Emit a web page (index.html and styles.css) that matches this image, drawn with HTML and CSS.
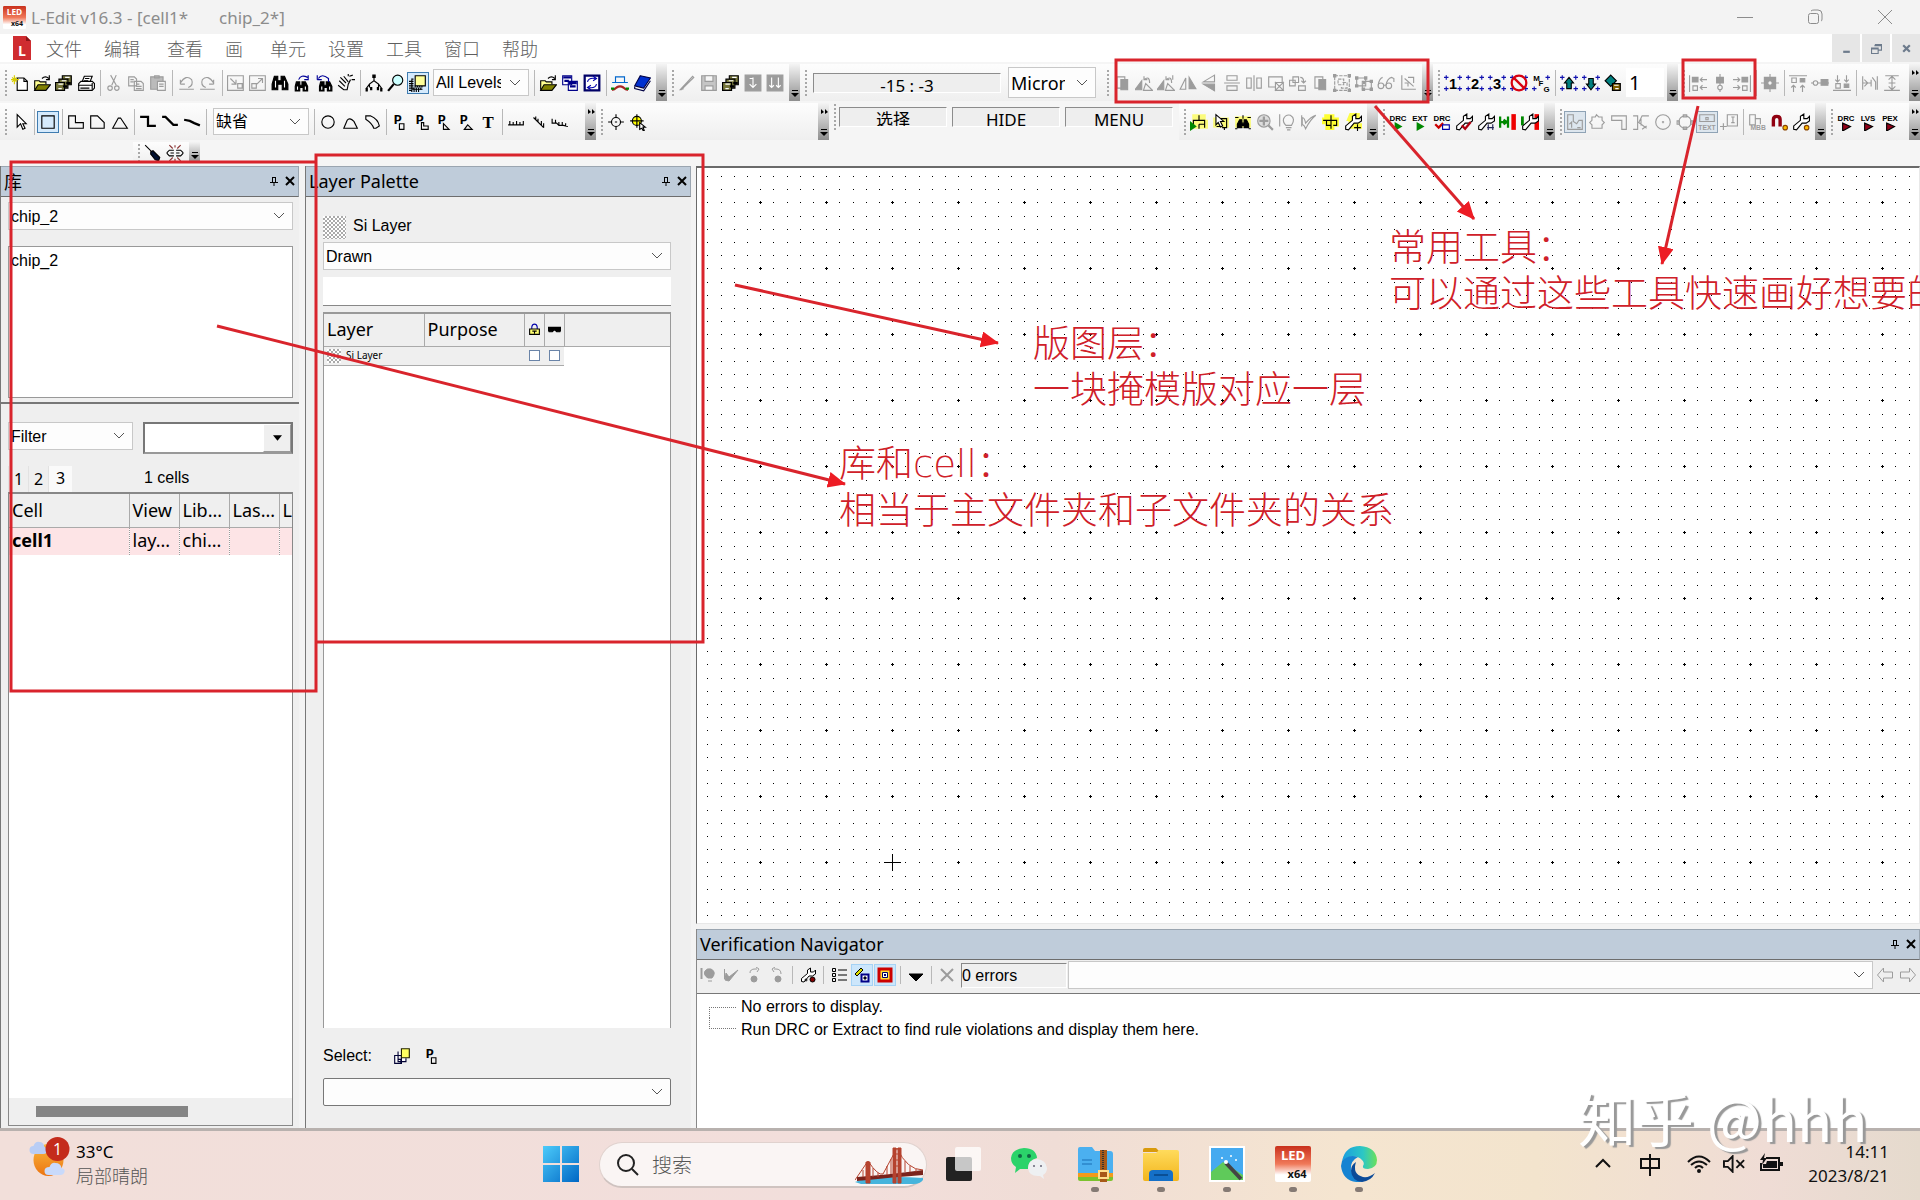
FILE: index.html
```html
<!DOCTYPE html>
<html lang="zh-CN">
<head>
<meta charset="utf-8">
<title>L-Edit v16.3</title>
<link rel="stylesheet" href="styles.css">
</head>
<body>
<svg class="defs" aria-hidden="true">
  <defs>
    <linearGradient id="blueTile" x1="0" y1="0" x2="1" y2="1"><stop offset="0" stop-color="#4ccbfa"/><stop offset="1" stop-color="#0067c5"/></linearGradient>
    <linearGradient id="ledRed" x1="0" y1="0" x2="0" y2="1"><stop offset="0" stop-color="#c9301c"/><stop offset=".5" stop-color="#f0795a"/><stop offset=".8" stop-color="#fff"/></linearGradient>
    <linearGradient id="sun" x1="0" y1="0" x2="0" y2="1"><stop offset="0" stop-color="#f9b83c"/><stop offset="1" stop-color="#ec7412"/></linearGradient>
    <linearGradient id="edgeA" x1="0" y1="0" x2="1" y2="0"><stop offset="0" stop-color="#1a9de0"/><stop offset=".6" stop-color="#2cc7c4"/><stop offset="1" stop-color="#6be05a"/></linearGradient>
    <linearGradient id="folderY" x1="0" y1="0" x2="0" y2="1"><stop offset="0" stop-color="#ffdb5c"/><stop offset="1" stop-color="#f2b51d"/></linearGradient>
  </defs>
  <symbol id="new" viewBox="0 0 16 16"><path d="M5.500 3.500h6l3 3v8h-9z" fill="#fff"/><path d="M11.500 3.500v3h3"/><path d="M3 1v8M0 5h7M1 3l4 4M5 3l-4 4" stroke="#d8cc00"/></symbol>
  <symbol id="open" viewBox="0 0 16 16"><path d="M1.500 14v-8h4l1 1h5v2" fill="#ffff90"/><path d="M1.500 14.500l3-5h11l-4 5z" fill="#808000"/><path d="M8 4q3-3 6 0M14.500 1v4h-3"/></symbol>
  <symbol id="saveall" viewBox="0 0 16 16"><g fill="#78783c"><path d="M6.500 1.500h8v8h-8z"/><path d="M3.500 4.500h8v8h-8z"/><path d="M.5 7.500h8v7h-8z"/></g><path d="M9 3h4M6 6h4M3 9h4M3 13h3" stroke="#fff"/><path d="M10 8h4M7 11h4" stroke="#000" stroke-width="2"/></symbol>
  <symbol id="print" viewBox="0 0 16 16"><path d="M4.500 7l2-5h7l-2 5M1.500 8.500l2-2h10l2 2v4l-2 2h-12z" fill="#fff"/><path d="M1 10h13M7 4h4M6 6h4M3 12.500h8M13.500 8v6"/></symbol>
  <symbol id="cut" viewBox="0 0 16 16"><path d="M5 1l5 9M10 1L6 10"/><circle cx="4.500" cy="12.500" r="2"/><circle cx="10.500" cy="12.500" r="2"/></symbol>
  <symbol id="copy" viewBox="0 0 16 16"><path d="M1.500 2.500h5l2 2v6h-7zM6.500 6.500h6l2 2v6h-8z" fill="#f4f4f4"/><path d="M3 5h3M3 7h3M8 9h3M8 11h5M8 13h5"/></symbol>
  <symbol id="paste" viewBox="0 0 16 16"><path d="M1.500 2.500h11v11h-11z" fill="#bbb"/><path d="M7.500 6.500h7v8h-7z" fill="#f4f4f4"/><path d="M5 1.500h4v2h-4zM9 9h4M9 11h4"/></symbol>
  <symbol id="undo" viewBox="0 0 16 16"><path d="M3 9V5M3 9h4M3 8q5-8 10-3 2 5-3 7M2 13.500h13"/></symbol>
  <symbol id="redo" viewBox="0 0 16 16"><path d="M13 9V5M13 9H9M13 8Q8 0 3 5q-2 5 3 7M1 13.500h13"/></symbol>
  <symbol id="zin" viewBox="0 0 16 16"><path d="M.5 1.500h14v13H.500zM3 4l5 5M8 5v4H4M9.500 8.500h4v4h-4z"/></symbol>
  <symbol id="zout" viewBox="0 0 16 16"><path d="M.5 1.500h14v13H.500zM7 9l5-5M8 4h4v4M2.500 8.500h4v4h-4z"/></symbol>
  <symbol id="bino" viewBox="0 0 16 16"><path d="M3 2h3v4h3V2h3l3 7v5h-5V9H6v5H1V9z" fill="currentColor"/><path d="M4 6v6M12 6v6" stroke="#fff"/></symbol>
  <symbol id="binor" viewBox="0 0 16 16"><path d="M3 7h3v3h2V7h3l2 4v4H9v-3H6v3H2v-4z" fill="currentColor"/><path d="M4 11v3M11 11v3" stroke="#fff"/><path d="M5 5q2-5 8-2M13.500 1v4H10" stroke="#009"/></symbol>
  <symbol id="binol" viewBox="0 0 16 16"><path d="M5 7h3v3h2V7h3l2 4v4h-4v-3H8v3H4v-4z" fill="currentColor"/><path d="M6 11v3M13 11v3" stroke="#fff"/><path d="M2 5V1M2 5h4M3 4q3-5 9 0v3" stroke="#009"/></symbol>
  <symbol id="hand" viewBox="0 0 16 16"><path d="M2 6l5 5M3 3l5 5M6 2l4 5M12 5l-2 4-1 5H6l-5-4M11 2l3-1M13 5h3M10 0v2"/></symbol>
  <symbol id="tree" viewBox="0 0 16 16"><path d="M8 3v3L4 9v3M8 6l4 3v3M4 9l-3 4M12 9l3 4"/><path d="M7 1h2v2H7zM1 13h1v2H1zM5 12h1v2H5zM11 12h1v2h-1zM14 13h1v2h-1z" fill="currentColor"/></symbol>
  <symbol id="mag" viewBox="0 0 16 16"><circle cx="9.500" cy="5.500" r="4.500" fill="#cff"/><path d="M6 9l-5 6" stroke-width="2"/></symbol>
  <symbol id="layers" viewBox="0 0 16 16"><path d="M3 4v9h9M1 6v9h9M5 11h7" stroke-width="2" stroke-dasharray="1 1"/><path d="M5.500 1.500h9v9h-9z" fill="#ff9"/><path d="M2.500 5v8.500H12"/></symbol>
  <symbol id="wins" viewBox="0 0 16 16"><path d="M1.500 1.500h8v8h-8zM6.500 6.500h8v8h-8z" fill="#fff" stroke="#008"/><path d="M2 3h7M3 6h4M7 8h7M8 11h5" stroke="#008" stroke-width="2"/></symbol>
  <symbol id="cycle" viewBox="0 0 16 16"><path d="M1.500 1.500h13v13h-13z" fill="#fff" stroke="#006" stroke-width="2"/><path d="M4 7q1-4 7-3M12 9q-1 4-7 3M9 2l3 2-3 2M7 10l-3 2 3 2" stroke="#00a"/></symbol>
  <symbol id="xsec" viewBox="0 0 16 16"><path d="M4 2.500h8v5H4zM1 7.500h14" stroke="#06c"/><path d="M1 14q2 0 4-2 3-2 6 0 2 2 4 2" stroke="#a22" stroke-width="2"/><path d="M0 13h3M13 13h3" stroke="#080" stroke-width="2"/></symbol>
  <symbol id="book" viewBox="0 0 16 16"><path d="M6.500 1.500l9 2-6 9-8-2z" fill="#0030d0" stroke="#004"/><path d="M1.500 11v2l8 2 6-9" stroke="#004"/></symbol>
  <symbol id="pen" viewBox="0 0 16 16"><path d="M2 14l11-12 1 1L3 14zM2 14l3-1"/></symbol>
  <symbol id="disk" viewBox="0 0 16 16"><path d="M1.500 1.500h13v13h-13z" fill="#c5c5c5"/><path d="M4.500 1.500h7v5h-7zM4.500 10.500h7v4h-7z" fill="#f6f6f6"/></symbol>
  <symbol id="down1" viewBox="0 0 16 16"><path d="M1 1h14v14H1z" fill="currentColor"/><path d="M8 3v9M5 9l3 3 3-3M5 4h3" stroke="#fff"/></symbol>
  <symbol id="down2" viewBox="0 0 16 16"><path d="M1 1h14v14H1z" fill="currentColor"/><path d="M5 3v9M11 3v9M3 10l2 2 2-2M9 10l2 2 2-2" stroke="#fff"/></symbol>
  <symbol id="dup" viewBox="0 0 16 16"><path d="M3.500 2.500h7v10h-7z"/><path d="M7 5h6v9H7z" fill="currentColor"/></symbol>
  <symbol id="rot" viewBox="0 0 16 16"><path d="M0 14l6-8v8z" fill="currentColor"/><path d="M7.500 14.500h8l-6-6zM8 5q5-4 5 3M8 2v3h3"/></symbol>
  <symbol id="rota" viewBox="0 0 16 16"><path d="M0 14l6-8v8z" fill="currentColor"/><path d="M7.500 14.500h8l-6-6zM8 5q5-4 5 3M8 2v3h3M14 1v4"/></symbol>
  <symbol id="fliph" viewBox="0 0 16 16"><path d="M1 13.500l5-10v10z"/><path d="M9 13V3l6 10z" fill="currentColor"/></symbol>
  <symbol id="flipv" viewBox="0 0 16 16"><path d="M2 7l10-6v6z"/><path d="M2 9h10v6z" fill="currentColor"/></symbol>
  <symbol id="slh" viewBox="0 0 16 16"><path d="M3.500 1.500h9v4h-9zM3.500 10.500h9v4h-9zM1 8h14"/></symbol>
  <symbol id="slv" viewBox="0 0 16 16"><path d="M1.500 3.500h4v9h-4zM10.500 3.500h4v9h-4zM8 1v14"/></symbol>
  <symbol id="nib" viewBox="0 0 16 16"><path d="M7 11.500H1.500v-9h12V7M7.500 7.500h7v7h-7zM7 7l8 8M15 7l-8 8"/></symbol>
  <symbol id="merge" viewBox="0 0 16 16"><path d="M.5 5.500h5v5h-5zM3.500 2.500h5v5h-5zM8.500 10.500h6v4h-6zM10 3q3 0 3 4M11 6l2 2 2-2"/></symbol>
  <symbol id="group" viewBox="0 0 16 16"><path d="M4.500 4.500h5v5h-5zM8.500 7.500h4v5h-5v-2M1.500 1.500h13v13h-13z" stroke-dasharray="3 1"/><path d="M0 0h3v3H0zM13 0h3v3h-3zM0 13h3v3H0zM13 13h3v3h-3z" stroke="none" fill="currentColor"/></symbol>
  <symbol id="ungroup" viewBox="0 0 16 16"><path d="M1.500 3.500h8v7h-8zM6.500 6.500h8v7h-8z"/><path d="M0 2h3v3H0zM8 2h3v3H8zM0 9h3v3H0zM13 5h3v3h-3zM13 12h3v3h-3zM6 12h3v3H6zM7 7h2v2H7z" stroke="none" fill="currentColor"/></symbol>
  <symbol id="glass" viewBox="0 0 16 16"><circle cx="3.500" cy="10.500" r="2.500"/><circle cx="10.500" cy="10.500" r="2.500"/><path d="M1 10q1-6 4-7M8 10q1-6 5-7l2 1v3M6 10h2"/></symbol>
  <symbol id="xy" viewBox="0 0 16 16"><path d="M2.500 1v12.500H15M5 4l8 7M8 3h5v5M5 8h3v3"/></symbol>
  <symbol id="plus4" viewBox="0 0 16 16"><path d="M0 3h4M2 1v4M12 3h4M14 1v4M0 13h4M2 11v4M12 13h4M14 11v4" stroke="#1111b0"/></symbol>
  <symbol id="plus2" viewBox="0 0 16 16"><path d="M12 3h4M14 1v4M0 13h4M2 11v4" stroke="#1111b0"/></symbol>
  <symbol id="no" viewBox="0 0 16 16"><use href="#plus4"/><circle cx="8" cy="8" r="6.500" stroke="#d80010" stroke-width="2"/><path d="M3 3l10 10" stroke="#d80010" stroke-width="2"/></symbol>
  <symbol id="gup" viewBox="0 0 16 16"><use href="#plus4"/><path d="M8 3l4 5h-2v5H6V8H4z" fill="#008080"/></symbol>
  <symbol id="gdn" viewBox="0 0 16 16"><use href="#plus4"/><path d="M8 14l4-5h-2V4H6v5H4z" fill="#008080"/></symbol>
  <symbol id="gsave" viewBox="0 0 16 16"><path d="M6 1l5 5-5 5-5-5z" fill="#008080"/><path d="M7.500 8.500h7v6h-7z" fill="#806000"/><path d="M9 10h4M10 13h3" stroke="#fff"/></symbol>
  <symbol id="al" viewBox="0 0 16 16"><path d="M.5 1v15M3 3h5v4H3z" fill="currentColor"/><path d="M3.500 10.500h4v4h-4zM10 5h6M12 3l-2 2 2 2M10 12h6M12 10l-2 2 2 2"/></symbol>
  <symbol id="ac" viewBox="0 0 16 16"><path d="M5 3h6v5H5z" fill="currentColor"/><path d="M8 0v16"/><circle cx="8" cy="12" r="2" fill="#f4f4f4"/></symbol>
  <symbol id="ar" viewBox="0 0 16 16"><path d="M15.500 1v15M8 3h5v4H8z" fill="currentColor"/><path d="M8.500 10.500h4v4h-4zM0 5h6M4 3l2 2-2 2M0 12h6M4 10l2 2-2 2"/></symbol>
  <symbol id="cen" viewBox="0 0 16 16"><path d="M3 3h10v10H3zM8 0v16M0 8h16" fill="currentColor"/><circle cx="8" cy="8" r="2" fill="#f4f4f4"/></symbol>
  <symbol id="at" viewBox="0 0 16 16"><path d="M0 1.500h16M10 4h4v3h-4z" fill="currentColor"/><path d="M2.500 3.500h4v4h-4zM4 16v-6M2 12l2-2 2 2M12 16v-6M10 12l2-2 2 2"/></symbol>
  <symbol id="am" viewBox="0 0 16 16"><path d="M0 8h16M9 5h6v5H9z" fill="currentColor"/><circle cx="4" cy="8" r="2" fill="#f4f4f4"/></symbol>
  <symbol id="ab" viewBox="0 0 16 16"><path d="M0 14.500h16M10 9h4v3h-4z" fill="currentColor"/><path d="M2.500 8.500h4v4h-4zM4 1v6M2 5l2 2 2-2M12 1v6M10 5l2 2 2-2"/></symbol>
  <symbol id="dh" viewBox="0 0 16 16"><path d="M1.500 2v12M14.500 2v12M1 8h8M3 5l3 3-3 3M9 5v6M10 3l3 4v7"/></symbol>
  <symbol id="dv" viewBox="0 0 16 16"><path d="M2 1.500h12M1 14.500h14M8 2v12M5 5l3-3 3 3M5 11l3 3 3-3M5 8h6"/></symbol>
  <symbol id="arrow" viewBox="0 0 16 16"><path d="M5.500 1.500v11l3-3 2 5 2-1-2-4h3z" fill="#fff"/></symbol>
  <symbol id="rect" viewBox="0 0 16 16"><path d="M2.500 2.500h11v11h-11z"/></symbol>
  <symbol id="poly" viewBox="0 0 16 16"><path d="M1.500 2.500h6v6h7v5h-13z"/></symbol>
  <symbol id="poly45" viewBox="0 0 16 16"><path d="M1.500 2.500h6l6 6v5h-12z"/></symbol>
  <symbol id="polya" viewBox="0 0 16 16"><path d="M1.500 13.500l5-9h2l6 9z"/></symbol>
  <symbol id="wire" viewBox="0 0 16 16"><path d="M1 3.500h7v8h7" stroke-width="2"/></symbol>
  <symbol id="wire45" viewBox="0 0 16 16"><path d="M1 3.500h3l7 7h4" stroke-width="2"/></symbol>
  <symbol id="wirea" viewBox="0 0 16 16"><path d="M1 6l5 1 4 2 5 2" stroke-width="2"/></symbol>
  <symbol id="circ" viewBox="0 0 16 16"><circle cx="8" cy="8" r="5.500"/></symbol>
  <symbol id="pie" viewBox="0 0 16 16"><path d="M2.500 13.500l3-7q2-3 6 1l3 6z"/></symbol>
  <symbol id="torus" viewBox="0 0 16 16"><path d="M2.500 2.500h4q7 3 8 9l-3 2h-2q-1-4-7-8z"/></symbol>
  <symbol id="r1" viewBox="0 0 16 16"><path d="M1 10.500h14M2.500 7v3M5.500 8v2M8.500 7v3M11.500 8v2M14.500 7v3"/></symbol>
  <symbol id="r2" viewBox="0 0 16 16"><path d="M4 4l9 9M6 3v3M8 5v3M11 7v4M13 9v4"/></symbol>
  <symbol id="r3" viewBox="0 0 16 16"><path d="M1 5v4h4l2 2h4l4 1M4 6v3M7 8v3M10 8v3M13 9v3"/></symbol>
  <symbol id="tgt" viewBox="0 0 16 16"><circle cx="8" cy="8" r="4"/><path d="M8 1v3M8 12v3M1 8h3M12 8h3M7 8h2"/></symbol>
  <symbol id="tgty" viewBox="0 0 16 16"><circle cx="7" cy="7" r="4" fill="#ff0"/><path d="M7 1v12M1 7h12"/><path d="M9.500 8.500v6l2-1 1 2h1l-1-3h2z" fill="#fff"/></symbol>
  <symbol id="brush" viewBox="0 0 16 16"><path d="M1 1l6 6"/><path d="M6 7l2-1 6 6-1 3-3-1-4-5z" fill="#001030"/></symbol>
  <symbol id="unlink" viewBox="0 0 16 16"><path d="M7 5.500H3l-2 2v1l2 2h4M9 5.500h4l2 2v1l-2 2H9M4 8h3M9 8h3"/><path d="M3 1l3 3M8 1v2M13 1l-3 3M3 15l3-3M8 13v2M13 15l-3-3" stroke="#833"/></symbol>
  <symbol id="net" viewBox="0 0 16 16"><path d="M2 1h12v5h2v8H2z" fill="#ff0" stroke="none" opacity=".5"/><path d="M8 2v4M3 6.500h10M3 6v4M13 6v7M8 10h5M8 10v4"/><path d="M0 7l6 5-6 4z" fill="#080" stroke="none"/></symbol>
  <symbol id="netc" viewBox="0 0 16 16"><path d="M1 4h14v9H1z" fill="#ff0" stroke="none" opacity=".5"/><path d="M8 5h5v8H9M4 12h4M11 13v2"/><path d="M3.500 1.500v9l2-2 2 4 2-1-2-4h3z" fill="#fff"/></symbol>
  <symbol id="netb" viewBox="0 0 16 16"><path d="M1 3h14v10H1z" fill="#ff0" stroke="none" opacity=".5"/><path d="M5 6h2v3h2V6h2l2 4v3H9v-2H7v2H3v-3z" fill="currentColor"/><path d="M1 4h3M12 4h3M8 2v3M1 14h2M13 14h2"/></symbol>
  <symbol id="netz" viewBox="0 0 16 16"><circle cx="7" cy="7" r="5.500" fill="#ddd"/><path d="M7 3v8M3 7h8M11 11l4 4" stroke-width="2"/></symbol>
  <symbol id="bulb" viewBox="0 0 16 16"><path d="M1.500 1v11M7 11q-3-3-2-6 2-4 6-3 5 3 1 9zM7 13h5M8 15h3"/></symbol>
  <symbol id="check" viewBox="0 0 16 16"><path d="M1.500 2v10M2 10q2 1 3 4 4-8 9-12-4 1-9 7Q4 4 2 4z"/></symbol>
  <symbol id="nety" viewBox="0 0 16 16"><path d="M2 1h9v3h4v8h-4v3H3v-5H0V4h2z" fill="#ff0" stroke="none" opacity=".8"/><path d="M1 6.500h12M8 2v5M8 7v7M4 7v4h4M13 6v5h-3"/></symbol>
  <symbol id="wrench" viewBox="0 0 16 16"><path d="M1.500 14.500v-3l6-5V3l3-2v4h3l2-2v4l-3 2H9l-5 6z" fill="#fff"/></symbol>
  <symbol id="wry" viewBox="0 0 16 16"><path d="M5 0h9v9h2v5H4V7H2z" fill="#ff0" stroke="none" opacity=".7"/><use href="#wrench"/><path d="M9 13h6M12 10v6"/></symbol>
  <symbol id="wrr" viewBox="0 0 16 16"><use href="#wrench"/><path d="M6 11l3 3 5-6" stroke="#b00010" stroke-width="2"/></symbol>
  <symbol id="wrg" viewBox="0 0 16 16"><use href="#wrench"/><path d="M9 13h6M10 10v5M14 10v5" stroke="#225"/></symbol>
  <symbol id="wro" viewBox="0 0 16 16"><use href="#wrench"/><circle cx="13" cy="13" r="2" fill="#fb0" stroke="#840"/></symbol>
  <symbol id="wrb" viewBox="0 0 16 16"><use href="#wrench"/><circle cx="12.500" cy="12.500" r="2.500" fill="#800000"/><circle cx="6" cy="13" r="1"/></symbol>
  <symbol id="play" viewBox="0 0 16 16"><path d="M5 8l7 4-7 4z" fill="#080" stroke="none"/></symbol>
  <symbol id="tick" viewBox="0 0 16 16"><path d="M2 10l3 3 4-4" stroke="#c00" stroke-width="2"/><path d="M8.500 10.500h6v4h-6z" fill="#fff" stroke="#00a"/></symbol>
  <symbol id="playr" viewBox="0 0 16 16"><path d="M5 9l7 3-7 4z" fill="#900018"/></symbol>
  <symbol id="stop" viewBox="0 0 16 16"><path d="M1 3v10M1 8h5M4 6l3 2-3 2M8 3v10" stroke="#080" stroke-width="2"/><path d="M11 1h4v14h-4z" fill="#e00" stroke="none"/></symbol>
  <symbol id="wrs" viewBox="0 0 16 16"><path d="M1 3v8" stroke="#080" stroke-width="3"/><path d="M12 1h4v14h-4z" fill="#e00" stroke="none"/><use href="#wrench"/></symbol>
  <symbol id="s1" viewBox="0 0 16 16"><path d="M1.500 1.500h5v6l3 2 2-3h3v8h-13zM3 10l2-2v5M10 13h3"/></symbol>
  <symbol id="s2" viewBox="0 0 16 16"><path d="M3.500 3.500h3l1-2 2 2h3v3l2 2-2 2v3h-9v-3l-2-2 2-2z"/></symbol>
  <symbol id="s3" viewBox="0 0 16 16"><path d="M1.500 2.500h13v12h-4v-8h-9z"/></symbol>
  <symbol id="s4" viewBox="0 0 16 16"><path d="M1 2.500h4v12H1M9 14.500l4-3M15 2.500H9l-3 6 7 5M8 5v6"/></symbol>
  <symbol id="s5" viewBox="0 0 16 16"><circle cx="8" cy="8" r="6.500"/><path d="M7 8h2M8 7v2"/></symbol>
  <symbol id="s6" viewBox="0 0 16 16"><circle cx="8" cy="8" r="5.500"/><path d="M6.500 1.500h3v2h-3zM6.500 12.500h3v2h-3zM1 7h2v3H1zM13 7h2v3h-2z"/></symbol>
  <symbol id="s8" viewBox="0 0 16 16"><path d="M6.500 1.500h9v10h-9zM0 12h6M3 9v6M10 3.500h3M10 8.500h3M11.500 4v4"/></symbol>
  <symbol id="magnet" viewBox="0 0 16 16"><path d="M3 12V6q0-3 3-3t3 3v6" stroke="#900010" stroke-width="3"/><circle cx="13.500" cy="13" r="2" fill="#fb0" stroke="#840"/></symbol>
  <symbol id="list" viewBox="0 0 16 16"><path d="M1.500 1.500h3v3h-3zM1.500 6.500h3v3h-3zM1.500 11.500h3v3h-3zM7 3h9M7 8h9M7 13h9"/></symbol>
  <symbol id="ruler" viewBox="0 0 16 16"><path d="M1 7l6-6 2 2-6 6z" fill="#dd0"/><path d="M7.500 7.500h7v7h-7z" fill="#fff" stroke="#008" stroke-width="2"/><path d="M10 10h2v2h-2z" fill="#008"/></symbol>
  <symbol id="box" viewBox="0 0 16 16"><path d="M2 2h12v12H2z" fill="#fd3" stroke="#c00" stroke-width="3"/><path d="M5.500 5.500h5v5h-5z" fill="#fff" stroke="#006"/><path d="M7 7l2 2M9 7l-2 2" stroke="#006"/></symbol>
  <symbol id="redoc" viewBox="0 0 16 16"><path d="M4 6q0-4 5-4h2M10 0l3 2-2 3"/><circle cx="8" cy="12" r="3" fill="currentColor"/></symbol>
  <symbol id="undoc" viewBox="0 0 16 16"><path d="M12 7q0-5-5-5H5M6 0L3 2l2 3"/><circle cx="9" cy="12" r="3" fill="currentColor"/></symbol>
  <symbol id="bulbf" viewBox="0 0 16 16"><path d="M1.500 1v11" stroke-width="2"/><path d="M8 11q-5-3-3-7 2-3 6-2 6 3 1 9zM8 14h4" fill="currentColor"/></symbol>
  <symbol id="checkf" viewBox="0 0 16 16"><path d="M1.500 2v10M3 6l3 4 9-7-9 11-4-1z" fill="currentColor"/></symbol>
  <symbol id="tri" viewBox="0 0 16 16"><path d="M1 7h14l-7 7z" fill="currentColor"/></symbol>
  <symbol id="x" viewBox="0 0 16 16"><path d="M2 2l12 12M14 2L2 14" stroke-width="2"/></symbol>
  <symbol id="back" viewBox="0 0 16 16"><path d="M.5 8l6-7v4h9v6h-9v4z"/></symbol>
  <symbol id="fwd" viewBox="0 0 16 16"><path d="M15.500 8l-6-7v4h-9v6h9v4z"/></symbol>
  <symbol id="pin" viewBox="0 0 10 10"><path d="M3 1.500h4M3.500 1v5M6.500 1v5M1 6.500h8M5 7v3"/></symbol>
  <symbol id="close" viewBox="0 0 10 10"><path d="M1 1l8 8M9 1L1 9" stroke-width="2"/></symbol>
  <symbol id="sel" viewBox="0 0 16 16"><path d="M4.500 4v9h7v-3M1.500 7.500h6v7h-6zM4 11h3v3" fill="#fff" stroke="#003"/><path d="M7.500 1.500h7v8h-7z" fill="#ffff60" stroke="#220"/></symbol>
</svg>

<div class="app">
  <header class="titlebar">
    <svg class="applogo" viewBox="0 0 36 36"><rect width="36" height="36" rx="2" fill="url(#ledRed)" stroke="none"/><text x="18" y="14" class="led">LED</text><text x="22" y="32" class="x64">x64</text></svg>
    <h1>L-Edit v16.3 - [cell1*</h1><span class="doc">chip_2*]</span>
    <div class="winctl">
      <button aria-label="最小化"><svg viewBox="0 0 16 16"><path d="M0 8.500h16"/></svg></button>
      <button aria-label="还原"><svg viewBox="0 0 16 16"><rect x="1.500" y="4.500" width="10" height="10" rx="2"/><path d="M4 2q1-1 3-1h4q4 0 4 4v5q0 2-1 2"/></svg></button>
      <button aria-label="关闭"><svg viewBox="0 0 16 16"><path d="M1 1l14 14M15 1L1 15"/></svg></button>
    </div>
  </header>
  <nav class="menubar">
    <svg class="doclogo" viewBox="0 0 18 24"><path d="M0 0h13l5 5v19H0z" fill="#cf2c30"/><path d="M13 0l5 5h-5z" fill="#8c1518"/><text x="9" y="20" class="docl">L</text></svg>
    <button>文件</button><button>编辑</button><button class="wide">查看</button><button>画</button><button class="wide">单元</button><button>设置</button><button>工具</button><button>窗口</button><button>帮助</button>
    <div class="mdictl">
      <button aria-label="最小化"><svg viewBox="0 0 10 10"><path d="M2 8h6" stroke-width="2"/></svg></button>
      <button aria-label="还原"><svg viewBox="0 0 10 10"><path d="M3.500 1.500h6v5h-3M.5 4.500h6v5h-6zM3 2.500h6M1 5.500h5"/></svg></button>
      <button aria-label="关闭"><svg viewBox="0 0 10 10"><path d="M2 2l6 6M8 2L2 8" stroke-width="2"/></svg></button>
    </div>
  </nav>

  <section class="toolbars">
    <div class="row">
      <div class="bar"><i class="grip"></i>
        <button class="b"><svg><use href="#new"/></svg></button><button class="b"><svg><use href="#open"/></svg></button><button class="b"><svg><use href="#saveall"/></svg></button><button class="b"><svg><use href="#print"/></svg></button><i class="sep"></i>
        <button class="b" disabled><svg><use href="#cut"/></svg></button><button class="b" disabled><svg><use href="#copy"/></svg></button><button class="b" disabled><svg><use href="#paste"/></svg></button><i class="sep"></i>
        <button class="b" disabled><svg><use href="#undo"/></svg></button><button class="b" disabled><svg><use href="#redo"/></svg></button><i class="sep"></i>
        <button class="b" disabled><svg><use href="#zin"/></svg></button><button class="b" disabled><svg><use href="#zout"/></svg></button><button class="b"><svg><use href="#bino"/></svg></button><button class="b"><svg><use href="#binor"/></svg></button><button class="b"><svg><use href="#binol"/></svg></button><button class="b"><svg><use href="#hand"/></svg></button><i class="sep"></i>
        <button class="b"><svg><use href="#tree"/></svg></button><button class="b"><svg><use href="#mag"/></svg></button><button class="b on"><svg><use href="#layers"/></svg></button>
        <select class="combo tool" aria-label="层级"><option>All Levels</option></select><i class="sep"></i>
        <button class="b"><svg><use href="#open"/></svg></button><button class="b"><svg><use href="#wins"/></svg></button><button class="b"><svg><use href="#cycle"/></svg></button><i class="sep"></i>
        <button class="b"><svg><use href="#xsec"/></svg></button><button class="b"><svg><use href="#book"/></svg></button><button class="more" aria-label="更多"></button>
      </div>
      <div class="bar"><i class="grip"></i>
        <button class="b" disabled><svg><use href="#pen"/></svg></button><button class="b" disabled><svg><use href="#disk"/></svg></button><button class="b"><svg><use href="#saveall"/></svg></button><button class="b" disabled><svg><use href="#down1"/></svg></button><button class="b" disabled><svg><use href="#down2"/></svg></button><button class="more" aria-label="更多"></button>
      </div>
      <div class="bar locator"><i class="grip"></i><output class="field coords">-15 : -3</output><select class="combo units" aria-label="单位"><option>Microns</option></select></div>
      <div class="bar"><i class="grip"></i>
        <button class="b" disabled><svg><use href="#dup"/></svg></button><button class="b" disabled><svg><use href="#rot"/></svg></button><button class="b" disabled><svg><use href="#rota"/></svg></button><button class="b" disabled><svg><use href="#fliph"/></svg></button><button class="b" disabled><svg><use href="#flipv"/></svg></button><button class="b" disabled><svg><use href="#slh"/></svg></button><button class="b" disabled><svg><use href="#slv"/></svg></button><button class="b" disabled><svg><use href="#nib"/></svg></button><button class="b" disabled><svg><use href="#merge"/></svg></button><button class="b" disabled><svg><use href="#dup"/></svg></button><button class="b" disabled><svg><use href="#group"/></svg></button><button class="b" disabled><svg><use href="#ungroup"/></svg></button><button class="b" disabled><svg><use href="#glass"/></svg></button><button class="b" disabled><svg><use href="#xy"/></svg></button><button class="more" aria-label="更多"></button>
      </div>
      <div class="bar"><i class="grip"></i>
        <button class="b"><svg viewBox="0 0 16 16"><use href="#plus4"/><text x="8" y="13" class="num">1</text></svg></button><button class="b"><svg viewBox="0 0 16 16"><use href="#plus4"/><text x="8" y="13" class="num">2</text></svg></button><button class="b"><svg viewBox="0 0 16 16"><use href="#plus4"/><text x="8" y="13" class="num">3</text></svg></button><button class="b"><svg><use href="#no"/></svg></button><button class="b"><svg viewBox="0 0 16 16"><use href="#plus2"/><text x="4" y="6" class="t7">M</text><text x="8" y="11" class="t7">F</text><text x="13" y="16" class="t7">G</text></svg></button><i class="sep"></i>
        <button class="b"><svg><use href="#gup"/></svg></button><button class="b"><svg><use href="#gdn"/></svg></button><button class="b"><svg><use href="#gsave"/></svg></button><input class="gridn" value="1" aria-label="网格"><button class="more" aria-label="更多"></button>
      </div>
      <div class="bar grow"><i class="grip"></i>
        <button class="b" disabled><svg><use href="#al"/></svg></button><button class="b" disabled><svg><use href="#ac"/></svg></button><button class="b" disabled><svg><use href="#ar"/></svg></button><i class="sep"></i><button class="b" disabled><svg><use href="#cen"/></svg></button><i class="sep"></i>
        <button class="b" disabled><svg><use href="#at"/></svg></button><button class="b" disabled><svg><use href="#am"/></svg></button><button class="b" disabled><svg><use href="#ab"/></svg></button><i class="sep"></i>
        <button class="b" disabled><svg><use href="#dh"/></svg></button><button class="b" disabled><svg><use href="#dv"/></svg></button><button class="more" aria-label="更多"><svg class="chev" viewBox="0 0 8 5"><path d="M1 0v5l3-2zM5 0v5l3-2z"/></svg></button>
      </div>
    </div>
    <div class="row">
      <div class="bar"><i class="grip"></i>
        <button class="b"><svg><use href="#arrow"/></svg></button><i class="sep"></i><button class="b on"><svg><use href="#rect"/></svg></button><i class="sep"></i>
        <button class="b"><svg><use href="#poly"/></svg></button><button class="b"><svg><use href="#poly45"/></svg></button><button class="b"><svg><use href="#polya"/></svg></button><i class="sep"></i>
        <button class="b"><svg><use href="#wire"/></svg></button><button class="b"><svg><use href="#wire45"/></svg></button><button class="b"><svg><use href="#wirea"/></svg></button><i class="sep"></i>
        <select class="combo tool" aria-label="线宽"><option>缺省</option></select><i class="sep"></i>
        <button class="b"><svg><use href="#circ"/></svg></button><button class="b"><svg><use href="#pie"/></svg></button><button class="b"><svg><use href="#torus"/></svg></button><i class="sep"></i>
        <button class="b"><svg viewBox="0 0 16 16"><text x="6" y="10" class="pp">P</text><path d="M7.500 9.500h4v5h-4z"/></svg></button><button class="b"><svg viewBox="0 0 16 16"><text x="6" y="10" class="pp">P</text><path d="M7.500 8.500h2v3h4v3h-6z"/></svg></button><button class="b"><svg viewBox="0 0 16 16"><text x="6" y="10" class="pp">P</text><path d="M7.500 14.500v-5l5 5z"/></svg></button><button class="b"><svg viewBox="0 0 16 16"><text x="6" y="10" class="pp">P</text><path d="M6.500 14.500l3-4 4 4z"/></svg></button><button class="b"><svg viewBox="0 0 16 16"><text x="8" y="13" class="tt">T</text></svg></button><i class="sep"></i>
        <button class="b"><svg><use href="#r1"/></svg></button><button class="b"><svg><use href="#r2"/></svg></button><button class="b"><svg><use href="#r3"/></svg></button><button class="more apart" aria-label="更多"><svg class="chev" viewBox="0 0 8 5"><path d="M1 0v5l3-2zM5 0v5l3-2z"/></svg></button>
      </div>
      <div class="bar basepoint"><i class="grip"></i>
        <button class="b"><svg><use href="#tgt"/></svg></button><button class="b"><svg><use href="#tgty"/></svg></button><button class="more" aria-label="更多"><svg class="chev" viewBox="0 0 8 5"><path d="M1 0v5l3-2zM5 0v5l3-2z"/></svg></button>
      </div>
      <div class="bar mouse"><i class="grip"></i><output class="field">选择</output><output class="field">HIDE</output><output class="field">MENU</output></div>
      <div class="bar"><i class="grip"></i>
        <button class="b"><svg><use href="#net"/></svg></button><button class="b"><svg><use href="#netc"/></svg></button><button class="b"><svg><use href="#netb"/></svg></button><button class="b" disabled><svg><use href="#netz"/></svg></button><button class="b" disabled><svg><use href="#bulb"/></svg></button><button class="b" disabled><svg><use href="#check"/></svg></button><button class="b"><svg><use href="#nety"/></svg></button><button class="b"><svg><use href="#wry"/></svg></button><button class="more" aria-label="更多"></button>
      </div>
      <div class="bar"><i class="grip"></i>
        <button class="b"><svg viewBox="0 0 16 16"><use href="#play"/><text x="8" y="7" class="t7">DRC</text></svg></button><button class="b"><svg viewBox="0 0 16 16"><use href="#play"/><text x="8" y="7" class="t7">EXT</text></svg></button><button class="b"><svg viewBox="0 0 16 16"><use href="#tick"/><text x="8" y="7" class="t7">DRC</text></svg></button><button class="b"><svg><use href="#wrr"/></svg></button><button class="b"><svg><use href="#wrg"/></svg></button><button class="b"><svg><use href="#stop"/></svg></button><button class="b"><svg><use href="#wrs"/></svg></button><button class="more" aria-label="更多"></button>
      </div>
      <div class="bar"><i class="grip"></i>
        <button class="b on" disabled><svg><use href="#s1"/></svg></button><button class="b" disabled><svg><use href="#s2"/></svg></button><button class="b" disabled><svg><use href="#s3"/></svg></button><button class="b" disabled><svg><use href="#s4"/></svg></button><button class="b" disabled><svg><use href="#s5"/></svg></button><button class="b" disabled><svg><use href="#s6"/></svg></button><button class="b on" disabled><svg viewBox="0 0 16 16"><path d="M1.500 1.500h13v6h-13zM7 4h2v2H7z"/><text x="8" y="15" class="t6">TEXT</text></svg></button><button class="b" disabled><svg><use href="#s8"/></svg></button><i class="sep"></i>
        <button class="b" disabled><svg viewBox="0 0 16 16"><path d="M1.500 1.500h5v9h-5zM7 5h4v5"/><text x="9" y="15" class="t6">MBB</text></svg></button><button class="b"><svg><use href="#magnet"/></svg></button><button class="b"><svg><use href="#wro"/></svg></button><button class="more" aria-label="更多"></button>
      </div>
      <div class="bar grow"><i class="grip"></i>
        <button class="b"><svg viewBox="0 0 16 16"><use href="#playr"/><text x="8" y="7" class="t7">DRC</text></svg></button><button class="b"><svg viewBox="0 0 16 16"><use href="#playr"/><text x="8" y="7" class="t7">LVS</text></svg></button><button class="b"><svg viewBox="0 0 16 16"><use href="#playr"/><text x="8" y="7" class="t7">PEX</text></svg></button><button class="more" aria-label="更多"><svg class="chev" viewBox="0 0 8 5"><path d="M1 0v5l3-2zM5 0v5l3-2z"/></svg></button>
      </div>
    </div>
    <div class="row third">
      <div class="bar"><i class="grip"></i><button class="b"><svg><use href="#brush"/></svg></button><button class="b"><svg><use href="#unlink"/></svg></button><button class="more" aria-label="更多"></button></div>
    </div>
  </section>

  <main class="work">
    <section class="panel library">
      <h2 class="phead">库<span><svg><use href="#pin"/></svg><svg><use href="#close"/></svg></span></h2>
      <div class="libtop">
        <select class="combo" aria-label="库"><option>chip_2</option></select>
        <div class="liblist">chip_2</div>
      </div>
      <div class="libcells">
        <div class="filters">
          <select class="combo" aria-label="过滤"><option>Filter</option></select>
          <div class="search"><input aria-label="过滤文本"><button aria-label="展开"><svg viewBox="0 0 10 6"><path d="M0 0h10L5 6z"/></svg></button></div>
        </div>
        <div class="tabs"><button>1</button><button>2</button><button class="cur">3</button><span>1 cells</span></div>
        <div class="cellbox">
          <table class="cells">
            <colgroup><col class="c1"><col class="c2"><col class="c2"><col class="c2"><col></colgroup>
            <thead><tr><th>Cell</th><th>View</th><th>Lib...</th><th>Las...</th><th>L</th></tr></thead>
            <tbody><tr><td><b>cell1</b></td><td>lay...</td><td>chi...</td><td></td><td></td></tr></tbody>
          </table>
          <div class="hscroll"><i></i></div>
        </div>
      </div>
    </section>

    <section class="panel palette">
      <h2 class="phead">Layer Palette<span><svg><use href="#pin"/></svg><svg><use href="#close"/></svg></span></h2>
      <div class="palbody">
        <div class="current"><i class="hatch"></i>Si Layer</div>
        <select class="combo" aria-label="用途"><option>Drawn</option></select>
        <input class="palfilter" aria-label="图层过滤">
        <div class="laybox">
          <table class="layers">
            <colgroup><col class="c3"><col class="c3"><col class="c4"><col class="c4"><col></colgroup>
            <thead><tr><th>Layer</th><th>Purpose</th>
              <th class="ic"><svg viewBox="0 0 12 12"><path d="M3.500 6V3.500Q4 1 6 1t2.500 2.500V6" stroke="#00a"/><path d="M1.500 5.500h9v5h-9z" fill="#ffff70"/><path d="M4 7.500h4M6 7v3"/></svg></th>
              <th class="ic"><svg viewBox="0 0 12 12"><path d="M0 4h12v2l-1 2H8L6 6 4 8H1L0 6z" fill="#000"/></svg></th><th></th></tr></thead>
            <tbody><tr><td colspan="2"><i class="hatch small"></i>Si Layer</td><td class="ic"><input type="checkbox" aria-label="锁定"></td><td class="ic"><input type="checkbox" aria-label="隐藏"></td></tr></tbody>
          </table>
        </div>
        <div class="selrow">Select:<svg><use href="#sel"/></svg><svg viewBox="0 0 16 16"><text x="6" y="10" class="pp">P</text><path d="M7.500 9.500h4v5h-4z"/></svg></div>
        <select class="combo dark" aria-label="选择"><option></option></select>
      </div>
    </section>

    <section class="editor">
      <div class="canvas">
        <svg width="100%" height="100%">
          <defs><pattern id="grid" width="66" height="66" patternUnits="userSpaceOnUse" x="62" y="33">
            <path d="M1 1h1v1h-1zM14 1h1v1h-1zM28 1h1v1h-1zM41 1h1v1h-1zM54 1h1v1h-1zM1 15h1v1h-1zM14 15h1v1h-1zM28 15h1v1h-1zM41 15h1v1h-1zM54 15h1v1h-1zM1 28h1v1h-1zM14 28h1v1h-1zM28 28h1v1h-1zM41 28h1v1h-1zM54 28h1v1h-1zM1 41h1v1h-1zM14 41h1v1h-1zM28 41h1v1h-1zM41 41h1v1h-1zM54 41h1v1h-1zM1 54h1v1h-1zM14 54h1v1h-1zM28 54h1v1h-1zM41 54h1v1h-1zM54 54h1v1h-1zM0 1h3v1h-3zM1 0h1v3h-1z"/></pattern></defs>
          <rect width="100%" height="100%" fill="url(#grid)"/>
          <path d="M187 694h17v1h-17zM195 686h1v17h-1z"/>
        </svg>
      </div>
      <section class="verify">
        <h2 class="phead">Verification Navigator<span><svg><use href="#pin"/></svg><svg><use href="#close"/></svg></span></h2>
        <div class="vbar">
          <button class="b" disabled><svg><use href="#bulbf"/></svg></button><button class="b" disabled><svg><use href="#checkf"/></svg></button><button class="b" disabled><svg><use href="#redoc"/></svg></button><button class="b" disabled><svg><use href="#undoc"/></svg></button><i class="sep"></i>
          <button class="b"><svg><use href="#wrb"/></svg></button><i class="sep"></i>
          <button class="b"><svg><use href="#list"/></svg></button><button class="b on"><svg><use href="#ruler"/></svg></button><button class="b on"><svg><use href="#box"/></svg></button><i class="sep"></i>
          <button class="b"><svg><use href="#tri"/></svg></button><i class="sep"></i>
          <button class="b" disabled><svg><use href="#x"/></svg></button>
          <output class="errs">0 errors</output>
          <select class="combo" aria-label="规则"><option></option></select>
          <button class="b" disabled><svg><use href="#back"/></svg></button><button class="b" disabled><svg><use href="#fwd"/></svg></button>
        </div>
        <ul class="tree"><li>No errors to display.</li><li>Run DRC or Extract to find rule violations and display them here.</li></ul>
      </section>
    </section>
  </main>

  <footer class="taskbar">
    <div class="weather">
      <svg viewBox="0 0 40 44"><ellipse cx="19" cy="24" rx="15" ry="16" fill="url(#sun)"/><path d="M4 18q-4 0-4-4t4-4q2-5 6-4 4 0 5 5 4 1 3 4t-4 3z" fill="#b9cdf5"/><path d="M19 39q-4 0-4-4t5-4q2-5 6-4 5 0 6 5 4 1 3 4t-4 3z" fill="#c9dafb"/><ellipse cx="28" cy="13" rx="12" ry="12" fill="#c42b1c"/><text x="28" y="19" class="badge">1</text></svg>
      <p><span>33°C</span><span class="dim">局部晴朗</span></p>
    </div>
    <div class="apps">
      <button class="start" aria-label="开始"><svg viewBox="0 0 36 36"><path d="M0 0h17v17H0zM19 0h17v17H19zM0 19h17v17H0zM19 19h17v17H19z" fill="url(#blueTile)"/></svg></button>
      <label class="find">
        <svg class="lens" viewBox="0 0 24 24"><circle cx="10" cy="10" r="8"/><path d="M16 16l6 6"/></svg>
        <input placeholder="搜索">
        <svg class="bridge" viewBox="0 0 68 38"><path d="M0 36q20-7 68-4v2q-3 4-9 4H6z" fill="#46b4dc"/><path d="M2 31q30-2 66-7v5Q40 31 2 35z" fill="#7a231c"/><path d="M11 16h4v21h-4zM38 2h3v35h-3zM43 2h3v35h-3zM39 8h6M39 14h6M39 20h6" fill="#b5432f" stroke="#b5432f"/><path d="M0 34L13 15q10 15 15 13L42 2q10 22 26 22M8 24v7M18 22v9M23 27v4M32 20v9M36 13v15M50 15v11M55 20v6M61 23v3" fill="none" stroke="#b5432f"/></svg>
      </label>
      <button aria-label="任务视图"><svg viewBox="0 0 36 36"><rect x="1" y="11" width="26" height="24" rx="2" fill="#222"/><rect x="10" y="1" width="26" height="24" rx="2" fill="#fff" opacity=".75"/></svg></button>
      <button aria-label="微信"><svg viewBox="0 0 36 36"><path d="M13 2q12 0 13 10-9 2-9 11H9l-5 4 1-6q-5-3-5-9Q1 3 13 2z" fill="#2bd36a"/><path d="M26 13q9 1 10 9 0 5-4 7l1 4-4-3q-11 1-12-8 0-8 9-9z" fill="#eef0f2"/><g fill="#164"><circle cx="9" cy="10" r="2"/><circle cx="18" cy="10" r="2"/></g><g fill="#667"><circle cx="23" cy="20" r="1"/><circle cx="30" cy="20" r="1"/></g></svg></button>
      <button class="run" aria-label="压缩"><svg viewBox="0 0 36 36"><path d="M1 3q0-2 2-2h12l3 4h15q3 0 3 3v20H1z" fill="#4bb0f0"/><path d="M1 27h35v4H1z" fill="#f29a1c"/><path d="M1 31h35v2q0 2-2 2H3q-2 0-2-2z" fill="#7cc22e"/><path d="M23 4h7v32h-7z" fill="#a85a18"/><path d="M26 4v20" stroke="#333" stroke-width="2" stroke-dasharray="1 1"/><rect x="22" y="25" width="9" height="7" fill="none" stroke="#ffe08a" stroke-width="2"/><path d="M5 14h10M5 18h10" stroke="#1a6fb5"/></svg></button>
      <button class="run" aria-label="资源管理器"><svg viewBox="0 0 36 36"><path d="M0 4q0-2 2-2h11l4 4H0z" fill="#d99a0b"/><path d="M0 7h13l3-3h18q2 0 2 2v27q0 2-2 2H2q-2 0-2-2z" fill="url(#folderY)"/><path d="M6 35v-7q0-4 4-4h16q4 0 4 4v7z" fill="#1570c8"/><path d="M11 29h14" stroke="#0a4f95" stroke-width="2"/></svg></button>
      <button class="run" aria-label="图片"><svg viewBox="0 0 36 36"><path d="M0 0h36v36H0z" fill="#fff"/><path d="M2 2h32v32H2z" fill="#45aaf0"/><path d="M2 26l12-10 20 13v5H2z" fill="#5fca5a"/><path d="M17 17l15 16" stroke="#444" stroke-width="4"/><g fill="#fff"><circle cx="17" cy="16" r="2"/><circle cx="13" cy="12" r="1"/><circle cx="22" cy="10" r="1"/><circle cx="27" cy="14" r="1"/></g></svg></button>
      <button class="run" aria-label="L-Edit"><svg viewBox="0 0 36 36"><rect width="36" height="36" rx="2" fill="url(#ledRed)" stroke="none"/><text x="18" y="14" class="led">LED</text><text x="22" y="32" class="x64">x64</text></svg></button>
      <button class="run" aria-label="Edge"><svg viewBox="0 0 36 36"><path d="M1 15Q4 0 19 0q16 1 17 14 0 8-9 9-6 0-5-3 2-3-1-6-8-8-20 1z" fill="url(#edgeA)"/><path d="M1 15Q8 8 17 11q-8 4-7 13 2 10 13 12Q2 38 0 20z" fill="#1583d2"/><path d="M15 16q-4 12 7 15 6 1 12-4-4 8-13 9-10-1-11-11 0-6 5-9z" fill="#0b4a98"/></svg></button>
    </div>
    <div class="tray">
      <svg class="up" viewBox="0 0 16 16"><path d="M1 11l7-7 7 7"/></svg>
      <svg class="ime" viewBox="0 0 20 22"><path d="M1 5h18v9H1zM10 0v22"/></svg>
      <svg class="wifi" viewBox="0 0 24 18"><path d="M1 7q11-11 22 0M4 10q8-7 16 0M8 13q4-4 8 0"/><circle cx="12" cy="16" r="1"/></svg>
      <svg class="mute" viewBox="0 0 24 18"><path d="M1 6h4l5-5v16l-5-5H1zM14 5l8 8M22 5l-8 8"/></svg>
      <svg class="bat" viewBox="0 0 24 20"><path d="M7 5h13v12H2V10"/><path d="M8 8h10v7H4v-4h3zM21 9h3v4h-3zM6 0L1 7h3l-1 5 5-7H5z" fill="#111" stroke="none"/></svg>
      <p class="clock"><span>14:11</span><span>2023/8/21</span></p>
    </div>
  </footer>

  <div class="notes">
    <svg width="1920" height="1200">
      <defs><marker id="head" markerUnits="userSpaceOnUse" markerWidth="20" markerHeight="18" refX="17" refY="8" orient="auto"><path d="M0 0l18 8-18 8z" fill="#ed1c24"/></marker></defs>
      <path d="M11 162h305v529H11zM316 155h387v487H316zM1116 60h312v42h-312zM1683 60h72v38h-72z"/>
      <g marker-end="url(#head)"><path d="M217 326L845 484"/><path d="M735 285L998 343"/><path d="M1375 106L1474 219"/><path d="M1698 106L1662 264"/></g>
    </svg>
    <p class="note tools">常用工具：<br>可以通过这些工具快速画好想要的</p>
    <p class="note mask">版图层：<br>一块掩模版对应一层</p>
    <p class="note cell">库和<span>cell</span>：<br>相当于主文件夹和子文件夹的关系</p>
    <p class="brand">知乎 @hhh</p>
  </div>
</div>
</body>
</html>
```
FILE: styles.css
```css
* { box-sizing: border-box; }
body { margin: 0; overflow: hidden; background: #f3f3f3; color: #000; font: 16px "Liberation Sans", "Noto Sans CJK SC", sans-serif; }
h1, h2, p, ul { margin: 0; padding: 0; font-weight: 400; list-style: none; }
button, input, select { font: inherit; color: inherit; border: 0; padding: 0; margin: 0; background: none; outline: 0; border-radius: 0; }
svg { fill: none; stroke: currentColor; stroke-width: 1; display: block; }
svg text { stroke: none; fill: currentColor; text-anchor: middle; }
.defs { position: absolute; width: 0; height: 0; }

/* lettering inside icons */
.num { font: 700 13px "Liberation Sans", sans-serif; }
.t7 { font: 700 7px "Liberation Sans", sans-serif; }
.t6 { font: 700 6px "Liberation Sans", sans-serif; }
.pp { font: 700 12px "Liberation Mono", monospace; }
.tt { font: 700 15px "Liberation Serif", serif; }
svg .led { font: 700 13px "Open Sans", sans-serif; fill: #fff; }
svg .x64 { font: 700 11px "Open Sans", sans-serif; fill: #111; }
svg .docl { font: 700 14px "Open Sans", sans-serif; fill: #fff; }
svg .badge { font: 16px "Open Sans", sans-serif; fill: #fff; }

.app { position: relative; height: 100vh; display: flex; flex-direction: column; overflow: hidden; }

.titlebar { height: 34px; display: flex; align-items: center; padding-left: 3px; background: #f3f3f3; color: #8c8c8c; font: 17px "Noto Sans", sans-serif; white-space: pre; }
.titlebar h1 { font-size: 17px; width: 188px; margin-left: 5px; }
.applogo { width: 23px; height: 23px; }
.winctl { margin-left: auto; display: flex; }
.winctl button { width: 70px; height: 34px; display: grid; place-items: center; }
.winctl svg { width: 16px; height: 16px; }

.menubar { height: 28px; display: flex; align-items: center; gap: 22px; padding-left: 13px; background: #fff; color: #5e5e5e; font: 300 18px "Noto Sans CJK SC", sans-serif; }
.menubar .doclogo { width: 18px; height: 24px; margin-right: -7px; stroke: none; }
.menubar .wide { margin-left: 5px; }
.mdictl { margin-left: auto; display: flex; gap: 2px; align-self: stretch; }
.mdictl button { width: 28px; background: #e6e6e6; display: grid; place-items: center; color: #6d7b8c; }
.mdictl svg { width: 11px; height: 11px; }

.toolbars { padding-top: 2px; background: #f5f5f5; height: 104px; flex: none; }
.row { height: 37px; display: flex; margin-bottom: 2px; overflow: hidden; }
.bar { display: flex; flex: none; align-items: center; background: linear-gradient(#fdfdfd, #efefef); }
.bar.grow { flex: 1; }
.grip { width: 9px; height: 26px; flex: none; background: repeating-linear-gradient(#a8a8a8 0 2px, transparent 2px 4px) 5px 0 / 2px 100% no-repeat; }
.sep { width: 6px; height: 26px; flex: none; background: linear-gradient(#b8b8b8, #b8b8b8) 3px 0 / 1px 100% no-repeat; }
.b { width: 22px; height: 22px; flex: none; display: grid; place-items: center; color: #000; }
.b svg { width: 18px; height: 18px; }
.b:disabled { color: #9c9c9c; }
.b.on { background: #d5eafc; border: 1px solid #3f7cb0; }
.b.on:disabled { background: #dde6ee; border-color: #8fa3b5; }
.more { width: 11px; height: 37px; margin-left: 3px; padding: 6px 0 0 2px; flex: none; display: flex; align-self: flex-start; align-items: flex-start; position: relative; background: linear-gradient(#f4f4f4, #8e8e8e); }
.more::before { content: ""; position: absolute; left: 2px; bottom: 4px; border: 4px solid transparent; border-bottom: 0; border-top-color: #000; }
.more::after { content: ""; position: absolute; left: 3px; bottom: 10px; width: 6px; height: 1px; background: #000; }
.chev { width: 8px; height: 5px; fill: #000; stroke: none; }
.grow .more { margin-left: auto; }
.apart { margin-left: 14px; }

.combo { appearance: none; height: 28px; padding: 0 30px 0 2px; overflow: hidden; background: #fdfdfd url("data:image/svg+xml,%3Csvg xmlns='http://www.w3.org/2000/svg' width='12' height='8'%3E%3Cpath d='M1 1l5 5 5-5' fill='none' stroke='%23555'/%3E%3C/svg%3E") no-repeat right 7px center; border: 1px solid #c8c8c8; }
.combo.tool { width: 96px; height: 27px; margin: 0 2px 0 4px; padding-right: 27px; }
.combo.units { width: 88px; height: 31px; margin-left: 7px; font: 18px "Noto Sans", sans-serif; }
.combo.dark { border-color: #777; border-radius: 2px; }
.field { display: block; height: 20px; overflow: hidden; border: 1px solid; border-color: #8c8c8c #fff #fff #8c8c8c; background: #eee; text-align: center; font: 17px/24px "Noto Sans", "Noto Sans CJK SC", sans-serif; }
.coords { width: 188px; margin-left: 4px; }
.locator { width: 302px; }
.basepoint { width: 233px; }
.basepoint .more { margin-left: auto; }
.mouse { width: 350px; gap: 5px; padding-bottom: 10px; background: #f5f5f5; }
.mouse .field { width: 108px; }
.mouse .grip { margin-right: -4px; }
.gridn { width: 38px; height: 29px; margin-left: 2px; padding-left: 3px; background: #fff; font: 20px "Noto Sans", sans-serif; }
.third { height: 21px; padding-left: 133px; }
.third .more { height: 21px; }

.work { flex: 1; display: flex; min-height: 0; background: #f3f3f3; }
.panel { display: flex; flex-direction: column; background: #efefef; border-left: 1px solid #777; flex: none; }
.library { width: 299px; margin-right: 6px; }
.palette { width: 386px; margin-right: 5px; }
.phead { height: 31px; flex: none; display: flex; align-items: center; padding: 0 0 2px 3px; background: #bfccda; border: 1px solid #9aa5b0; border-bottom-color: #6d6d6d; border-left: 0; font: 18px "Noto Sans", "Noto Sans CJK SC", sans-serif; }
.phead span { margin-left: auto; display: flex; gap: 6px; padding-right: 3px; }
.phead svg { width: 10px; height: 10px; }

.libtop { height: 207px; flex: none; padding: 5px 6px 5px 7px; border-bottom: 2px solid #777; }
.libtop .combo { width: 100%; display: block; }
.liblist { height: 152px; margin-top: 16px; padding: 5px 2px; background: #fff; border: 1px solid #999; }
.libcells { flex: 1; display: flex; flex-direction: column; padding: 18px 6px 2px 7px; min-height: 0; }
.filters { display: flex; gap: 10px; }
.filters .combo { width: 125px; flex: none; }
.search { flex: 1; min-width: 0; display: flex; height: 32px; border: 2px solid; border-color: #777 #777 #999 #777; background: #fff; }
.search input { flex: 1; width: 0; min-width: 0; }
.search button { width: 28px; display: grid; place-items: center; background: #efefef; border: 1px solid; border-color: #fff #999 #999 #fff; }
.search svg { width: 9px; height: 6px; fill: #000; stroke: none; }
.tabs { display: flex; height: 26px; margin-top: 12px; font: 16px "Noto Sans", sans-serif; align-items: stretch; }
.tabs button { width: 20px; border-left: 1px solid #e2e2e2; }
.tabs button.cur { width: 24px; background: #fafafa; padding-bottom: 2px; }
.tabs span { margin-left: 72px; font: 16px/23px "Liberation Sans", sans-serif; }
.cellbox { flex: 1; display: flex; flex-direction: column; background: #fff; border: 1px solid #888; border-top-width: 2px; }
table { border-collapse: collapse; table-layout: fixed; width: 100%; font: 18px "Noto Sans", sans-serif; }
th, td { text-align: left; font-weight: 400; padding: 0 0 0 3px; white-space: nowrap; overflow: hidden; }
th { background: #efefef; border-right: 1px solid #aaa; border-bottom: 1px solid #aaa; }
th:last-child { border-right: 0; }
.cells th { height: 33px; }
.cells td { height: 28px; padding-bottom: 2px; background: #fde4e6; border-right: 1px dotted #999; }
.cells td:last-child { border-right: 0; }
.c1 { width: 120px; }
.c2 { width: 50px; }
.hscroll { height: 27px; margin-top: auto; background: #efefef; padding: 8px 0 0 27px; }
.hscroll i { display: block; width: 152px; height: 11px; background: #858585; }

.palbody { flex: 1; display: flex; flex-direction: column; padding: 19px 20px 22px 17px; min-height: 0; }
.current { display: flex; gap: 7px; height: 26px; line-height: 20px; }
.hatch { width: 23px; height: 23px; flex: none; background: repeating-conic-gradient(#aaa 0 25%, #fff 0 50%) 0 0 / 4px 4px; }
.palfilter { height: 29px; margin-top: 7px; background: #fff; border-bottom: 1px solid #888; }
.laybox { flex: 1; margin-top: 6px; background: #fff; border: 1px solid #999; border-width: 2px 1px 0; }
.layers th { height: 32px; padding-bottom: 2px; }
.layers td { height: 19px; background: #efefef; border-bottom: 1px solid #aaa; font-size: 10px; }
.c3 { width: 100px; }
.c4 { width: 20px; }
.layers .ic { padding: 0; }
.ic svg { width: 13px; height: 13px; margin: auto; }
.ic input { appearance: none; display: block; width: 11px; height: 11px; margin: auto; background: #fff; border: 1px solid #6a84a8; }
.hatch.small { display: inline-block; width: 14px; height: 14px; margin-right: 5px; vertical-align: middle; }
.selrow { display: flex; align-items: center; height: 50px; padding-top: 5px; gap: 12px; }
.selrow svg { width: 18px; height: 18px; }
.selrow svg:first-of-type { margin-left: 9px; }

.editor { flex: 1; display: flex; flex-direction: column; min-width: 0; }
.canvas { flex: 1; background: #fff; border: 1px solid #e8e8e8; border-top: 2px solid #6a6a6a; border-left: 1px solid #6a6a6a; min-height: 0; margin-bottom: 5px; }
.canvas svg { stroke: none; fill: #000; shape-rendering: crispEdges; }
.verify { height: 199px; display: flex; flex-direction: column; border-left: 1px solid #888; background: #efefef; }
.vbar { height: 34px; display: flex; align-items: center; border-bottom: 1px solid #777; padding: 0 1px 3px 0; gap: 1px; flex: none; }
.vbar .sep { width: 7px; height: 18px; }
.vbar .b svg { width: 16px; height: 16px; }
.vbar .b.on { border-color: #a5d2f5; background: #cce6fb; }
.errs { width: 106px; height: 25px; margin-left: 2px; border: 1px solid; border-color: #888 #fff #fff #888; line-height: 23px; }
.vbar .combo { flex: 1; }
.tree { flex: 1; background: #fff; padding: 1px 0 0 12px; }
.tree li { height: 23px; line-height: 23px; display: flex; }
.tree li::before { content: ""; width: 26px; margin: 12px 5px 0 0; border: 1px dotted #777; border-width: 1px 0 0 1px; }
.tree li:last-child::before { margin: 0 5px 12px 0; border-width: 0 0 1px 1px; }

.taskbar { height: 72px; flex: none; display: grid; grid-template-columns: 1fr auto 1fr; border-top: 3px solid #b8b1ae; background: linear-gradient(90deg, #f2dfda 0, #f2dedb 45%, #f0ddd6 55%, #f5e5d0 70%, #f3e4cd 80%, #efdcd5 92%, #e5dacd 100%); font: 17px "Noto Sans", "Noto Sans CJK SC", sans-serif; }
.weather { display: flex; padding: 5px 0 0 29px; gap: 6px; }
.weather svg { width: 41px; height: 44px; stroke: none; }
.weather p { display: flex; flex-direction: column; line-height: 24px; padding-top: 4px; }
.weather .dim { color: #555; font-size: 18px; font-weight: 300; }
.apps { display: flex; align-items: flex-start; padding-top: 15px; gap: 30px; }
.apps button { width: 36px; height: 50px; position: relative; display: flex; align-items: flex-start; }
.apps button svg { width: 36px; height: 36px; stroke: none; }
.run::after { content: ""; position: absolute; left: 14px; bottom: 4px; width: 8px; height: 5px; border-radius: 3px; background: #857a74; }
.find { width: 328px; height: 46px; margin: -4px -12px 0 -10px; display: flex; align-items: center; padding: 0 3px 0 16px; background: #faf5f4; border: 1px solid #e0d2ce; border-bottom: 2px solid #cfc3c0; border-radius: 23px; }
.lens { width: 24px; height: 24px; color: #222; stroke-width: 2; }
.find input { flex: 1; min-width: 0; padding-left: 12px; font: 20px "Noto Sans CJK SC", sans-serif; }
.find input::placeholder { color: #555; opacity: 1; font-weight: 300; }
.bridge { width: 68px; height: 38px; stroke: none; }
.tray { display: flex; justify-content: flex-end; padding-right: 31px; color: #111; }
.tray svg { stroke-width: 2; height: 18px; margin-top: 24px; }
.tray .up { width: 16px; margin-right: 29px; }
.tray .ime { width: 20px; height: 22px; margin: 23px 27px 0 0; }
.tray .wifi { width: 24px; margin-right: 12px; }
.tray .mute { width: 23px; margin-right: 13px; }
.tray .bat { width: 24px; height: 20px; margin: 22px 25px 0 0; }
.clock { display: flex; flex-direction: column; line-height: 24px; text-align: right; padding-top: 9px; }

/* annotations laid over the window */
.notes { position: absolute; inset: 0; overflow: hidden; pointer-events: none; }
.notes svg { position: absolute; inset: 0; stroke: #d9242c; stroke-width: 3; }
.notes marker path { stroke: none; }
.note { position: absolute; white-space: nowrap; color: #cf2029; font: 300 37px/46px "Noto Sans CJK SC", sans-serif; }
.tools { left: 1389px; top: 222px; }
.mask { left: 1033px; top: 318px; }
.cell { left: 839px; top: 438px; }
.cell span { font: 200 37px/40px "DejaVu Sans Light", "DejaVu Sans", sans-serif; }
.brand { position: absolute; left: 1578px; top: 1080px; white-space: nowrap; color: #fff; font: 400 58px/74px "Noto Sans CJK SC", sans-serif; text-shadow: 3px 2px 1px #999; }
```
